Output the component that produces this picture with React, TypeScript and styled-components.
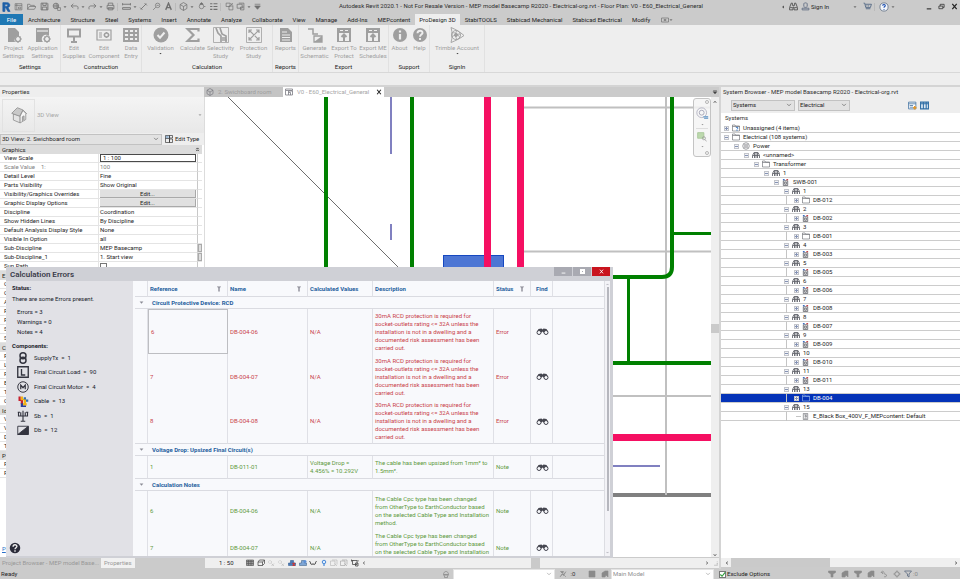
import React from "react";
import styled, { createGlobalStyle, css } from "styled-components";

const GlobalStyle = createGlobalStyle`
  *, *::before, *::after { box-sizing: border-box; }
  body { margin: 0; background: #cbcbcb; }
  body, button, input, select, table {
    font-family: Roboto, "Noto Sans", sans-serif;
    font-size: 6px;
    line-height: 8px;
    color: #1e1e1e;
  }
  button, input, select { margin: 0; padding: 0; border: 0; background: none; border-radius: 0; }
  select { appearance: none; }
  svg { display: block; flex: none; }
`;

/* ---------- icons ---------- */

const glyphs: Record<string, React.ReactNode> = {
  revit: (
    <path d="M3 1h6c3.500 0 5 1.700 5 4 0 2-1.200 3.300-3 3.900L14.500 15H11L8 9.300H6.200V15H3z M6.200 3.500v3.500h2.300c1.500 0 2.300-.6 2.300-1.800s-.8-1.700-2.300-1.700z" fillRule="evenodd" fill="#1d5fa8" stroke="#1d5fa8" />
  ),
  home: <path d="M2 3h12v11H2z M2 6h12 M5 3v11 M8 9h4v3H8z" />,
  open: <path d="M1 13V4h4l1 2h7v2 M1 13l3-5h12l-3 5z" />,
  save: <path d="M2 2h11l1 1v11H2z M5 2v4h6V2 M4 14V9h8v5" strokeWidth="1.600" />,
  sync: <><circle cx="7" cy="7" r="5" fill="#b0b0b0" /><path d="M2 7h10 M7 2c3 3 3 7 0 10 M10 10h5v5h-5z" /></>,
  undo: <path d="M6 3L2 7l4 4 M2 7h9c3 0 4 2 3 6" strokeWidth="1.400" />,
  redo: <path d="M10 3l4 4-4 4 M14 7H5c-3 0-4 2-3 6" strokeWidth="1.400" />,
  print: <path d="M4 6V2h8v4 M2 6h12v6H2z M4 10h8v4H4z" strokeWidth="1.400" />,
  measure: <path d="M1 4h14 M1 2v4 M15 2v4 M1 10h14v3H1z" strokeWidth="1.500" />,
  align: <path d="M3 13L13 3 M10 2l4 4 M2 10l4 4" strokeWidth="1.500" />,
  tag: <><circle cx="10" cy="6" r="4" /><path d="M7 9l-5 5 M8 6h4" /></>,
  letter: <path d="M3 14L8 2l5 12 M5 10h6" strokeWidth="2.400" />,
  cube: <path d="M8 1l6 3.500v7L8 15l-6-3.500v-7z M2 4.500L8 8l6-3.500 M8 8v7" strokeWidth="1.300" />,
  section: <><circle cx="8" cy="8" r="4" /><path d="M8 1l3 3H5z M12 8h3" fill="currentColor" /></>,
  lines: <path d="M2 3h4 M2 8h4 M2 13h4 M8 3h7 M8 8h7 M8 13h7" strokeWidth="2" />,
  closeHidden: <path d="M2 2h7v6H2z M7 7h7v7H7z M10 2l4 4 M14 2l-4 4" />,
  switchWin: <path d="M2 4h9v7H2z M5 2h9v7 M8 9h6v5H8z" strokeWidth="1.300" />,
  more: <path d="M3 4h10 M3 7h10l-5 6z" fill="currentColor" />,
  binoc: <path d="M4 2h2v4h4V2h2l3 8v4H9V9H7v5H1v-4z M2 10h4 M10 10h4" strokeWidth="1.400" />,
  user: <path d="M5 3c0-2 6-2 6 0v5c-1 2-5 2-6 0z M2 14v-3h12v3z" strokeWidth="1.500" />,
  cart: <path d="M1 2h2l2 8h8l2-6H4 M5 12h8 M7 6v2 M10 6v2" strokeWidth="1.500" />,
  helpRing: <><circle cx="8" cy="8" r="6.500" fill="#f2f5fa" /><path d="M6 6c0-3 4.500-2.500 4 0-.3 1.200-2 1.300-2 3 M8 11v1.500" strokeWidth="1.800" stroke="#1d4fb0" /></>,
  min: <path d="M2 13h12" strokeWidth="2.800" />,
  restore: <path d="M2 7h9v6H2z M5 7V3h9v7h-3" strokeWidth="1.800" />,
  close: <path d="M3 2l10 12 M13 2L3 14" strokeWidth="2.800" />,
  docGear: (
    <>
      <path d="M2 1h7l4 4v4a4 4 0 0 0-4 6H2z" fill="currentColor" stroke="none" />
      <circle cx="12" cy="12" r="2.500" />
      <path d="M12 8v1.500 M12 14.500V16 M8 12h1.500 M14.500 12H16 M9.500 9.500l1 1 M13.500 13.500l1 1 M14.500 9.500l-1 1 M10.500 13.500l-1 1" />
    </>
  ),
  appGear: (
    <>
      <path d="M1 1h13v8a4 4 0 0 0-6 6H1z" fill="currentColor" stroke="none" />
      <path d="M2 4h11" stroke="#eee" />
      <circle cx="12" cy="12" r="2.500" />
      <path d="M12 8v1.500 M12 14.500V16 M8 12h1.500 M14.500 12H16 M9.500 9.500l1 1 M13.500 13.500l1 1 M14.500 9.500l-1 1 M10.500 13.500l-1 1" />
    </>
  ),
  supplies: <path d="M2 2.500h12v7H2z M8 10v5 M5 15h6" strokeWidth="2" />,
  component: <><path d="M1 3h14v10H1z M3 6h3 M3 8h3 M3 10h3" /><circle cx="10.500" cy="8" r="2" strokeWidth="1.400" /><path d="M10.500 5v1 M10.500 10v1 M7.500 8h1 M12.500 8h1" /></>,
  gridTable: <path d="M1 2h14v12H1z M1 6h14 M1 10h14 M6 2v12 M11 2v12" strokeWidth="1.900" />,
  tickDisc: <><circle cx="8" cy="8" r="7.500" fill="currentColor" stroke="none" /><path d="M4.500 8l2.500 2.700L11.500 5.500" stroke="#eee" strokeWidth="2" /></>,
  sigma: <path d="M13.500 4.500V2H2.500l6 6-6 6h11v-2.500" strokeWidth="2.200" strokeLinejoin="miter" />,
  selectivity: <><path d="M.5.5h15v15H.5z" strokeWidth=".8" /><path d="M3 1l2 5 3 3v6 M7 1l2 6 4 2v6 M9 11h4 M9 13h5" strokeWidth="1.700" /></>,
  protection: <><path d="M.5.5h15v15H.5z" strokeWidth=".8" /><path d="M3 3l10 10 M13 3L3 13 M3 6V3h3 M10 3h3v3 M3 10v3h3 M10 13h3v-3" strokeWidth="1.200" /></>,
  report: <><path d="M2 1h8l4 4v10H2z" fill="currentColor" stroke="none" /><path d="M4 5h5 M4 8h8 M4 10.500h8 M4 13h8" stroke="#eee" strokeWidth="1.200" /></>,
  schematic: <><path d="M1 2h5v5h5" strokeWidth="1.500" /><path d="M7 9h8v6H7z" strokeWidth="1.300" /><path d="M15 9v6H7z" fill="currentColor" stroke="none" /></>,
  exportPr: <><path d="M1 1h14v14H1z" fill="currentColor" stroke="none" /><path d="M3 6h10v8H3z" fill="#eee" stroke="none" /><path d="M8 14V8 M5.500 10L8 7.500 10.500 10" strokeWidth="2" /><path d="M4 3.500h3 M9 3.500h3" stroke="#eee" /></>,
  info: <><circle cx="8" cy="8" r="7" fill="currentColor" stroke="none" /><path d="M8 3.500v2 M8 7v5.500" stroke="#eee" strokeWidth="2.200" /></>,
  help: <><circle cx="8" cy="8" r="7" fill="currentColor" stroke="none" /><path d="M5.500 6.300C5.500 2.800 10.700 3 10.500 6 10.300 7.500 8 7.800 8 9.700 M8 11v2" stroke="#eee" strokeWidth="1.900" /></>,
  trimble: (
    <g strokeWidth=".9">
      <circle cx="7" cy="8" r="4.500" />
      <path d="M2 .5c1.500 5 1.500 10 0 15 5-2 9-4 13-7C11 5 7 2.500 2 .5z M3 6c3-1 6 1 8 5 M3 10c2-2 5-3 8-3 M8 3.500c-2 3-2 6 0 9" />
      <circle cx="7" cy="8" r="1.500" fill="currentColor" />
    </g>
  ),
  house: (
    <g strokeWidth=".7" stroke="#8c8c8c">
      <path d="M3 7v5.500l6 2.500V9z" fill="#e4e4e4" />
      <path d="M9 15l5-3V6.500L11.500 4 9 9z" fill="#f6f6f6" />
      <path d="M1.500 6.500L6.500 1.500 11.500 3.500 8.500 9z" fill="#c9c9c9" />
      <path d="M11.500 3.500L15 7 M11 13.500V9.500l1.500-.7v4" fill="#bdbdbd" />
    </g>
  ),
  editType: <><path d="M1 1h8v14H1z M9 1h6v5H9z M9 8h6v7H9z M1 7h8" /><path d="M4 1v6 M1 4h8" stroke="#4b7fb5" /></>,
  expand: <path d="M4 7l4-4 4 4 M4 13l4-4 4 4" strokeWidth="2.600" />,
  chevDown: <path d="M3 5l5 5 5-5" strokeWidth="1.800" />,
  chevUp: <path d="M3 11l5-6 5 6" strokeWidth="3.400" />,
  chevLeft: <path d="M11 3L5 8l6 5" strokeWidth="3.400" />,
  chevRight: <path d="M5 3l6 5-6 5" strokeWidth="3.400" />,
  chevBold: <path d="M3 5l5 6 5-6" strokeWidth="3.400" />,
  caret: <path d="M2 5h12L8 12z" fill="currentColor" stroke="none" />,
  caretLeft: <path d="M12 2v12L4 8z" fill="currentColor" stroke="none" />,
  planView: <path d="M1 2h14v3H1z M1 5v9h6 M7 6h8v8H7z M7 9h4v5" strokeWidth="1.500" />,
  folder: <path d="M1 14V2h5l1 2h8v10z M1 5h14" fill="#fff" strokeWidth="1.200" />,
  folderQ: <><path d="M1 14V2h5l1 2h8v10z M1 5h14" fill="#fff" /><path d="M8 8c0-2 4-2 4 0 0 1.500-2 1.500-2 3 M10 12.500V14" stroke="#2d6fc0" strokeWidth="2" /></>,
  power: <><circle cx="8" cy="8" r="6.500" /><path d="M6 4v8 M10 4v8" strokeWidth="1.600" /></>,
  circuit: <path d="M1 14V9l3-6h8l3 6v5 M5 4v10 M11 4v10 M1 9h14 M5 12h6 M8 3v6" strokeWidth="1.700" />,
  panelBoard: <><path d="M3 4h10v11H3z M6 7h4v5H6z" strokeWidth="1.900" /><path d="M2 0h4v3H2z" fill="#3b6fc4" stroke="none" /><path d="M10 0h4v3h-4z" fill="#c9444a" stroke="none" /></>,
  device: <path d="M3 1h10v14H3z M5 4h6 M5 12h6 M7 6h3v3H7z" strokeWidth="1.400" />,
  sheetStar: <><path d="M1 2h13v12H1z M1 5h13 M3 8h6 M3 11h6" stroke="#3f6f9f" strokeWidth="1.400" fill="#fff" /><path d="M12 9v6 M9 12h6" stroke="#e2962a" strokeWidth="2.600" /></>,
  columns: <path d="M1 2h14v12H1z M1 5h14 M6 2v12 M11 2v12" stroke="#2f6ea5" strokeWidth="1.900" fill="#dbe7f2" />,
  hatch: <><path d="M1 2h14v11H1z" fill="#9a9a9a" /><path d="M1 5h14 M1 9h14 M5 2v11 M10 2v11" stroke="#555" /></>,
  style: <path d="M2 6h9v7H2z M2 6l3-4h10l-4 4 M15 2v7l-4 4" strokeWidth="1.500" />,
  sunOff: <><circle cx="6" cy="6" r="3" strokeDasharray="2 1" /><path d="M9 9l5 5 M14 9l-5 5" /></>,
  cropBlue: <><path d="M1 8h4V3h6v5h4v5H1z" fill="#4a7ab5" stroke="#355f94" /><path d="M9 8l5 5 M14 8l-5 5" stroke="#c33" strokeWidth="2.400" /></>,
  cropBlue2: <><path d="M1 8h4V3h6v5h4v5H1z" fill="#7fa6d5" stroke="#47688f" /><circle cx="12" cy="5" r="3" fill="#5b8fd6" stroke="none" /></>,
  glasses: <path d="M1 4l3 5 M15 4l-3 5 M3 8c0 4 5 4 5 1 0 3 5 3 5-1" strokeWidth="1.800" />,
  bulb: <><circle cx="8" cy="6" r="3.500" stroke="#4a8ad8" strokeWidth="2" fill="#dcecff" /><path d="M8 10v4" stroke="#4a8ad8" strokeWidth="2.500" /></>,
  frame: <path d="M1 4h9v9H1z M4 2h10v9 M9 9l5 5" />,
  constraints: <path d="M3 3h9v8H3z M1 1v4 M1 3h4 M14 2v3 M9 8h5v6H9z" strokeWidth="1.600" />,
  filterT: <path d="M3 2h10 M5 4h6 M7 5h2v9H7z" strokeWidth="1.700" />,
  transformer: <><circle cx="8" cy="5" r="4" strokeWidth="2" /><circle cx="8" cy="11" r="4" strokeWidth="2" /></>,
  load: <path d="M1 1h14v14H1z M6 4v8h5" strokeWidth="1.800" />,
  motor: <><circle cx="8" cy="8" r="7" strokeWidth="1.300" /><path d="M5 11V5.500l3 3.500 3-3.500V11" strokeWidth="1.600" /></>,
  cable: (
    <g stroke="none">
      <path d="M2 2h3v4h3v6H5V8H2z" fill="#c8202c" />
      <path d="M5 2h3v3h4v7H9V7H5z" fill="#f1b315" />
      <path d="M9 3h3v3h3v3h-3V6H9z" fill="#2f6fb5" />
      <path d="M8 11h5v3H8z" fill="#f1b315" />
      <path d="M5 11h3v3h4v2H5z" fill="#2a3f9a" />
    </g>
  ),
  busbar: <path d="M2 3v5h12V3 M8 1v14 M5 3v5 M11 3v5 M1 3h3 M12 3h3 M5 15h6" strokeWidth="1.500" />,
  board: <><path d="M1 3h14v11H1z" /><path d="M15 3v11H1z" fill="currentColor" /></>,
  funnel: <path d="M1 2h14l-5 6v6l-3-2V8z" strokeWidth="1.600" />,
  worker: <path d="M3 9c0-8 10-8 10 0z M2 10h12 M5 11v4h6v-4" strokeWidth="1.500" />,
  pick: <path d="M2 14l4-6 3 3 5-8 M3 3h6l-2 4z M9 9l5 5" fill="currentColor" strokeWidth="1.300" />,
  block: <path d="M2 2h12v12H2z" fill="currentColor" />,
  blockPick: <path d="M2 14V6l6-4h6v12l-4-4-2 4z" fill="currentColor" />,
  gear: <><circle cx="8" cy="8" r="4.500" strokeWidth="2" /><path d="M8 1v2 M8 13v2 M1 8h2 M13 8h2" strokeWidth="2" /></>,
  link: <path d="M2 5c2-4 6-3 6 1s4 1 5 4-3 5-5 3 M2 5h3v3" strokeWidth="1.500" />,
  pin: <path d="M1 2h14v3l-5 3v6H6V8L1 5z" fill="currentColor" />,
  wheel: <><circle cx="7" cy="7" r="6" stroke="#aab" strokeWidth="1" /><circle cx="7" cy="7" r="3" stroke="#aab" /><path d="M9 12h6 M10 14h5" stroke="#7fa8cf" strokeWidth="1.800" /></>,
  zoomRegion: <><path d="M1 1h10v9H1z" fill="#bcd9ad" stroke="#a3c493" /><circle cx="11" cy="10" r="2.500" stroke="#999" /><path d="M13 12l2 3" stroke="#999" /></>,
  grip: <path d="M14 4v10H4 M14 9v5H9" strokeDasharray="2 2" strokeWidth="2" />,
  tickMark: <path d="M3 8l4 4 7-9" stroke="#2e9c3a" strokeWidth="2.600" />,
  panelToggle: <path d="M1 4h14v8H1z M6 7h4v2H6z" strokeWidth="1.500" />,
};

const Glyph = ({ name, size = 8 }: { name: string; size?: number }) => (
  <svg width={size} height={size} viewBox="0 0 16 16" fill="none" stroke="currentColor" strokeWidth="1.200" aria-hidden="true">
    {glyphs[name]}
  </svg>
);

const FindGlyph = () => (
  <svg width="13" height="7" viewBox="0 0 26 14" aria-hidden="true">
    <path d="M5 2l6-1 2 2 2-2 6 1 3 5-4 3-5-1-2-2-2 2-5 1-4-3z" fill="#44454f" />
    <circle cx="6" cy="9" r="4" fill="#f8f9fc" stroke="#44454f" strokeWidth="2" />
    <circle cx="20" cy="9" r="4" fill="#f8f9fc" stroke="#44454f" strokeWidth="2" />
  </svg>
);

/* ---------- frame ---------- */

const Shell = styled.div`
  position: relative;
  display: flex;
  flex-direction: column;
  height: 100vh;
  overflow: hidden;
  background: #cbcbcb;
  white-space: nowrap;
`;

const TitleBar = styled.header`
  display: flex;
  align-items: center;
  height: 13px;
  color: #6f6f6f;
`;

const Slot = styled.button<{ $w: number; $color?: string }>`
  display: flex;
  align-items: center;
  justify-content: center;
  flex: none;
  width: ${(p) => p.$w}px;
  height: 12px;
  color: ${(p) => p.$color ?? "inherit"};
`;

const Gap = styled.span<{ $w: number }>`
  flex: none;
  width: ${(p) => p.$w}px;
`;

const Separator = styled.span`
  flex: none;
  width: 1px;
  height: 8px;
  margin: 0 2px 0 1px;
  background: #bababa;
`;

const WindowTitle = styled.h1`
  flex: 1;
  margin: 0;
  padding-bottom: 2px;
  text-align: center;
  font-size: 6px;
  line-height: 8px;
  font-weight: 400;
  color: #2e2e2e;
`;

const SignInLabel = styled.button`
  width: 38px;
  text-align: left;
`;

const TabRow = styled.nav`
  display: flex;
  align-items: stretch;
  height: 12px;
  padding-top: 1px;
`;

const RibbonTab = styled.button<{ $active?: boolean; $file?: boolean }>`
  padding: 0 5px;
  color: #242424;
  ${(p) => p.$active && css`background: #eeeeee; padding: 0 4px;`}
  ${(p) => p.$file && css`background: #1f78b4; color: #fff; width: 23px; padding: 0;`}
`;

const Ribbon = styled.section`
  display: flex;
  height: 48px;
  background: #eeeeee;
  border-bottom: 1px solid #d8d8d8;
`;

const Panel = styled.div<{ $w: number }>`
  display: flex;
  flex-direction: column;
  justify-content: space-between;
  width: ${(p) => p.$w}px;
  padding: 2px 0 1px;
  border-right: 1px solid #e1e1e1;
`;

const PanelButtons = styled.div`
  display: flex;
`;

const PanelCaption = styled.div`
  text-align: center;
  color: #242424;
`;

const ToolButton = styled.button<{ $w: number }>`
  display: flex;
  flex-direction: column;
  align-items: center;
  flex: none;
  width: ${(p) => p.$w}px;
  color: #9f9f9f;
  white-space: pre;
  text-align: center;
  & > span { margin-top: 1px; }
`;

const MenuMark = styled.i`
  display: block;
  color: #444;
`;

const OptionsBar = styled.div`
  height: 14px;
  background: #eeeeee;
  border-bottom: 2px solid #d4d4d4;
`;

const Main = styled.main`
  flex: 1;
  min-height: 0;
  display: grid;
  grid-template-columns: 204px minmax(0, 1fr) 241px;
`;

/* ---------- properties ---------- */

const Column = styled.section`
  display: flex;
  flex-direction: column;
  min-width: 0;
  min-height: 0;
`;

const DockTitle = styled.h2`
  flex: none;
  margin: 0;
  height: 10px;
  padding: 1px 2px;
  font-size: 6px;
  line-height: 8px;
  font-weight: 400;
  background: #eeeeee;
  color: #2e2e2e;
`;

const TypeCard = styled.div`
  display: flex;
  align-items: center;
  height: 36px;
  padding: 1px 2px;
  background: linear-gradient(#f4f4f4, #e8e8e8);
  color: #a6a6a6;
`;

const TypeThumb = styled.span`
  display: flex;
  align-items: center;
  justify-content: center;
  width: 33px;
  height: 33px;
  border: 1px solid #e2e2e2;
`;

const TypeName = styled.span`
  flex: 1;
  padding-left: 2px;
`;

const InstanceBar = styled.div`
  display: flex;
  align-items: center;
  height: 12px;
  gap: 3px;
  background: #eeeeee;
`;

const SelectBox = styled.label<{ $w?: number; $plain?: boolean }>`
  display: grid;
  grid-template-columns: minmax(0, 1fr) 8px;
  align-items: center;
  ${(p) => (p.$w ? `width: ${p.$w}px;` : "flex: 1;")}
  height: 11px;
  border: 1px solid ${(p) => (p.$plain ? "#e4e4e4" : "#c2c2c2")};
  background: ${(p) => (p.$plain ? "#ffffff" : "#e2e2e2")};
  color: ${(p) => (p.$plain ? "#a0a0a0" : "#5a5a5a")};
  select {
    grid-area: 1 / 1 / 2 / 3;
    width: 100%;
    padding-left: 1px;
    color: ${(p) => (p.$plain ? "#909090" : "#1e1e1e")};
  }
  svg { grid-area: 1 / 2; pointer-events: none; }
`;

const EditType = styled.button`
  display: flex;
  align-items: center;
  gap: 2px;
  width: 36px;
`;

const PropsBody = styled.div`
  flex: 1;
  min-height: 0;
  overflow: hidden;
  background: #fff;
`;

const PropsTable = styled.table`
  width: 202px;
  border-collapse: separate;
  border-spacing: 0;
  table-layout: fixed;
  td, th {
    height: 9px;
    padding: 0 1px;
    border-bottom: 1px solid #e4e4e4;
    font-weight: 400;
    text-align: left;
    overflow: hidden;
  }
  tbody th { padding-left: 4px; border-right: 1px solid #e4e4e4; }
  tr > td:last-child { border-left: 1px solid #c8c8c8; padding: 0; }
`;

const GroupHead = styled.th`
  && { background: #dcdcdc; padding: 0 2px; border: 0; height: 9px; }
  div { display: flex; justify-content: space-between; align-items: center; }
`;

const PropRow = styled.tr<{ $muted?: boolean }>`
  th, td { color: ${(p) => (p.$muted ? "#808080" : "#1e1e1e")}; }
`;

const ScaleInput = styled.input`
  display: block;
  width: 100%;
  height: 8px;
  padding: 0 0 1px 2px;
  line-height: 6px;
  border: 1px solid #4a4a4a;
`;

const EditButton = styled.button`
  display: block;
  width: 100%;
  height: 8px;
  line-height: 7px;
  background: #e0e0e0;
  border: solid #a9a9a9;
  border-width: 0 1px 1px 0;
`;

const MiniButton = styled.button`
  display: block;
  width: 4px;
  height: 8px;
  background: #dedede;
  border: 1px solid #aaa;
`;

const SmallCheck = styled.input`
  display: block;
  appearance: none;
  width: 7px;
  height: 7px;
  border: 1px solid #777;
  background: #fff;
`;

const HelpLink = styled.a`
  flex: none;
  padding: 0 2px 4px;
  background: #fff;
  color: #2a6fc9;
`;

const DockTabs = styled.div`
  flex: none;
  display: flex;
  align-items: center;
  height: 12px;
  padding-left: 2px;
  gap: 3px;
  background: #cbcbcb;
`;

const DockTab = styled.button<{ $active?: boolean }>`
  height: 10px;
  color: #989898;
  ${(p) => p.$active ? css`padding: 0 3px; background: #f1f1f1;` : css`width: 96px; text-align: left;`}
`;

/* ---------- drawing area ---------- */

const ViewTabs = styled.div`
  flex: none;
  display: flex;
  align-items: center;
  height: 10px;
  background: #cbcbcb;
`;

const ViewTab = styled.button<{ $active?: boolean; $w: number }>`
  display: flex;
  align-items: center;
  gap: 4px;
  width: ${(p) => p.$w}px;
  height: 10px;
  padding: 0 2px;
  background: ${(p) => (p.$active ? "#ffffff" : "#c4c4c4")};
  color: ${(p) => (p.$active ? "#a6a6a6" : "#9c9c9c")};
  svg:first-child { color: #74747c; }
  svg:last-child:not(:first-child) { margin-left: auto; color: #222; }
`;

const Spacer = styled.span`
  flex: 1;
`;

const CanvasRow = styled.div`
  flex: 1;
  min-height: 0;
  display: flex;
  border-left: 1px solid #dcdcdc;
`;

const Canvas = styled.div`
  position: relative;
  flex: 1;
  min-width: 0;
  overflow: hidden;
  background: #fff;
`;

const NavBar = styled.div`
  position: absolute;
  top: 1px;
  right: 0;
  display: flex;
  flex-direction: column;
  align-items: center;
  justify-content: space-between;
  width: 18px;
  height: 59px;
  padding: 1px 0;
  border: 1px solid #c4c4c4;
  border-radius: 3px;
  background: rgba(245, 245, 245, 0.85);
  color: #9a9a9a;
  hr { width: 12px; margin: 0; border: 0; border-top: 1px solid #ddd; }
`;

const NavDot = styled.button`
  align-self: flex-end;
  width: 4px;
  height: 4px;
  margin-right: 1px;
  border: 1px solid #b5b5b5;
  border-radius: 50%;
`;

const VScroll = styled.div`
  flex: none;
  display: flex;
  flex-direction: column;
  justify-content: space-between;
  align-items: center;
  width: 8px;
  padding: 3px 0 0;
  background: #efefef;
  color: #444;
`;

const VThumb = styled.span`
  width: 8px;
  height: 9px;
  background: #cacaca;
`;

const ViewBar = styled.div`
  flex: none;
  display: flex;
  align-items: center;
  height: 12px;
  padding-left: 14px;
  background: #efefef;
  border: solid #cbcbcb;
  border-width: 1px 0 1px 1px;
  color: #4a4a4a;
`;

const ScaleLabel = styled.button`
  width: 25px;
  text-align: left;
`;

const HTrack = styled.div<{ $before: number }>`
  flex: 1;
  align-self: stretch;
  display: flex;
  padding-left: ${(p) => p.$before}px;
`;

const HThumb = styled.span<{ $w: number }>`
  width: ${(p) => p.$w}px;
  background: #cacaca;
`;

/* ---------- system browser ---------- */

const BrowserColumn = styled(Column)`
  border-left: 2px solid #d4d4d4;
`;

const BrowserTools = styled.div`
  flex: none;
  display: flex;
  align-items: center;
  gap: 3px;
  height: 16px;
  padding: 0 31px 0 10px;
  background: #eeeeee;
`;

const BrowserBody = styled.div`
  flex: 1;
  min-height: 0;
  overflow: hidden;
  background: #fff;
`;

const TreeHead = styled.div`
  height: 11px;
  padding: 1px 4px 0;
  color: #333;
`;

const Tree = styled.ul`
  margin: 0;
  padding: 0;
  list-style: none;
`;

const TreeRow = styled.li<{ $selected?: boolean }>`
  display: flex;
  align-items: center;
  height: 9px;
  padding-left: 1px;
  border-bottom: 1px solid #cccccc;
  background: ${(p) => (p.$selected ? "#0433b8" : "transparent")};
  color: ${(p) => (p.$selected ? "#ffffff" : "#262626")};
  svg { color: ${(p) => (p.$selected ? "#9fc0ee" : "#5f6168")}; }
  svg path { ${(p) => p.$selected && "fill: none;"} }
`;

const Indent = styled.span<{ $line?: boolean }>`
  flex: none;
  width: 10px;
  height: 9px;
  ${(p) => p.$line && "background: linear-gradient(#c4c4c4, #c4c4c4) 4px 0 / 1px 100% no-repeat;"}
`;

const Toggle = styled.button<{ $open?: boolean }>`
  flex: none;
  width: 5px;
  height: 5px;
  margin: 1px 3px 0 2px;
  border: 1px solid #c3c5cb;
  background:
    linear-gradient(#8492b4, #8492b4) center / 3px 1px no-repeat,
    ${(p) => (p.$open ? "" : "linear-gradient(#8492b4, #8492b4) center / 1px 3px no-repeat,")}
    #f2f3f6;
`;

const Leaf = styled.span`
  flex: none;
  width: 5px;
  height: 1px;
  margin: 0 1px 0 4px;
  background: #c4c4c4;
`;

const TreeLabel = styled.span<{ $gap: number }>`
  padding-left: ${(p) => p.$gap}px;
`;

const BrowserScroll = styled.div`
  flex: none;
  display: flex;
  align-items: center;
  height: 12px;
  padding: 0 2px;
  background: #efefef;
  border-bottom: 2px solid #cbcbcb;
  border-top: 1px solid #fff;
  color: #333;
`;

/* ---------- status bar ---------- */

const StatusBar = styled.footer`
  flex: none;
  display: flex;
  align-items: center;
  height: 10px;
  color: #8a8a8a;
`;

const Ready = styled.span`
  width: 438px;
  padding-left: 1px;
  color: #1e1e1e;
`;

const CheckLabel = styled.label`
  display: flex;
  align-items: center;
  gap: 1px;
  width: 106px;
  color: #1e1e1e;
  span { display: grid; }
  span > * { grid-area: 1 / 1; }
`;

/* ---------- dialog ---------- */

const Dialog = styled.section`
  position: absolute;
  left: 6px;
  top: 267px;
  width: 607px;
  height: 291px;
  display: flex;
  flex-direction: column;
  background: #cfd0d6;
  border: solid #cfd0d6;
  border-width: 0 3px 2px 0;
`;

const DialogBar = styled.div`
  flex: none;
  display: flex;
  align-items: flex-start;
  height: 14px;
`;

const DialogTitle = styled.h2`
  flex: 1;
  margin: 0;
  padding: 2px 4px;
  font-size: 8px;
  line-height: 11px;
  font-weight: 600;
  color: #3a3b4a;
`;

const WinButton = styled.button<{ $danger?: boolean }>`
  display: flex;
  align-items: center;
  justify-content: center;
  width: 18px;
  height: 9px;
  margin-left: 1px;
  color: #fff;
  background: ${(p) => (p.$danger ? "#c9141e" : "#a9aab2")};
`;

const DialogBody = styled.div`
  flex: 1;
  min-height: 0;
  display: flex;
`;

const Summary = styled.aside`
  flex: none;
  display: flex;
  flex-direction: column;
  width: 127px;
  padding: 3px 0 2px 6px;
  background: #e1e1e6;
  color: #20212c;
  h3 { margin: 0; font-size: 6px; line-height: 8px; font-weight: 700; }
  p { margin: 3px 0 4px; line-height: 8px; }
`;

const Counts = styled.ul`
  margin: 0 0 5px;
  padding: 0 0 0 5px;
  list-style: none;
  line-height: 10px;
`;

const Components = styled.ul`
  margin: 1px 0 0;
  padding: 0 0 0 5px;
  list-style: none;
  li { display: flex; align-items: center; gap: 5px; height: 15px; padding-bottom: 1px; }
  li:nth-child(odd) { height: 14px; }
  svg { color: #33343f; }
`;

const HelpButton = styled.button`
  width: 12px;
  margin-top: auto;
  margin-left: -3px;
  color: #2b2c3a;
`;

const GridWrap = styled.div`
  flex: 1;
  min-width: 0;
  overflow: hidden;
  padding-left: 2px;
  background: #f8f9fc;
`;

const Grid = styled.table`
  width: 100%;
  border-collapse: separate;
  border-spacing: 0;
  table-layout: fixed;
  white-space: pre-line;
  th, td {
    padding: 0 1px 0 2px;
    text-align: left;
    vertical-align: middle;
    border-right: 1px solid #dfe0e6;
  }
  th:last-child, td:last-child { border-right: 0; }
  thead th { height: 16px; font-weight: 700; color: #1f5f9e; border-bottom: 1px solid #dadbe1; }
  thead div { display: flex; align-items: center; justify-content: space-between; color: #7c7d88; padding-right: 4px; white-space: nowrap; }
  thead span { color: #1f5f9e; }
  thead th:nth-child(7) { padding-left: 5px; }
`;

const GroupRow = styled.tr`
  th {
    height: 12px;
    padding-left: 4px;
    font-weight: 700;
    color: #1f5f9e;
    border: solid #dadbe1;
    border-width: 0 0 1px;
  }
  th:first-child { color: #8a8b94; }
`;

const ErrorRow = styled.tr<{ $kind: string; $h: number; $last?: boolean }>`
  height: ${(p) => p.$h}px;
  td {
    color: ${(p) => (p.$kind === "Error" ? "#c9414b" : "#5e9a41")};
    border-bottom: ${(p) => (p.$last ? "1px solid #dadbe1" : "0")};
  }
`;

const FocusCell = styled.td`
  && { border: 1px solid #bdbec2; }
`;

const FindButton = styled.button`
  display: block;
  margin: 0 auto;
`;

const DialogScroll = styled.div`
  flex: none;
  display: flex;
  flex-direction: column;
  align-items: center;
  gap: 1px;
  width: 6px;
  padding: 2px 0;
  background: #f3f3f7;
  border-left: 1px solid #dcdde2;
  color: #9a9ba3;
`;

const DialogThumb = styled.span`
  width: 2px;
  height: 224px;
  margin-bottom: auto;
  background: #b6b7be;
`;

/* ---------- data ---------- */

type Tool = [icon: string, label: string, width: number, menu?: boolean];
const panels: { caption: string; width: number; tools: Tool[] }[] = [
  { caption: "Settings", width: 61, tools: [["docGear", "Project\nSettings", 27], ["appGear", "Application\nSettings", 31]] },
  { caption: "Construction", width: 81, tools: [["supplies", "Edit\nSupplies", 26], ["component", "Edit\nComponent", 34], ["gridTable", "Data\nEntry", 20]] },
  { caption: "Calculation", width: 131, tools: [["tickDisc", "Validation", 37, true], ["sigma", "Calculate", 27], ["selectivity", "Selectivity\nStudy", 29], ["protection", "Protection\nStudy", 37]] },
  { caption: "Reports", width: 26, tools: [["report", "Reports", 25]] },
  { caption: "Export", width: 90, tools: [["schematic", "Generate\nSchematic", 31], ["exportPr", "Export To\nProtect", 28], ["exportPr", "Export ME\nSchedules", 30]] },
  { caption: "Support", width: 41, tools: [["info", "About", 21], ["help", "Help", 19]] },
  { caption: "SignIn", width: 55, tools: [["trimble", "Trimble Account", 54, true]] },
];

const ribbonTabs = [
  "File", "Architecture", "Structure", "Steel", "Systems", "Insert", "Annotate", "Analyze", "Collaborate", "View", "Manage",
  "Add-Ins", "MEPcontent", "ProDesign 3D", "StabiTOOLS", "Stabicad Mechanical", "Stabicad Electrical", "Modify",
];

const quickTools: [string, number][] = [
  ["home", 12], ["open", 15], ["save", 11], ["sync", 12], ["caret", 6], ["undo", 12], ["caret", 6], ["redo", 12], ["caret", 6],
  ["print", 12], ["|", 4], ["measure", 12], ["caret", 5], ["align", 13], ["tag", 12], ["letter", 12], ["|", 4], ["cube", 11],
  ["caret", 6], ["section", 12], ["lines", 12], ["|", 4], ["closeHidden", 12], ["switchWin", 11], ["caret", 5], ["more", 12],
];

type Prop = [name: string, value?: string, kind?: string];
const graphics: Prop[] = [
  ["View Scale", "1 : 100", "input"],
  ["Scale Value\u00a0\u00a0\u00a0 1:", "100", "muted"],
  ["Detail Level", "Fine"],
  ["Parts Visibility", "Show Original"],
  ["Visibility/Graphics Overrides", "Edit...", "button"],
  ["Graphic Display Options", "Edit...", "button"],
  ["Discipline", "Coordination"],
  ["Show Hidden Lines", "By Discipline"],
  ["Default Analysis Display Style", "None"],
  ["Visible In Option", "all"],
  ["Sub-Discipline", "MEP Basecamp", "mini"],
  ["Sub-Discipline_1", "1. Start view", "mini"],
  ["Sun Path", "", "check"],
];
const initials = (letters: string): Prop[] => [...letters].map((l) => [l]);
const propGroups: [string, Prop[]][] = [
  ["Graphics", graphics],
  ["E", initials("CCAFFSS")],
  ["C", initials("RLPETC")],
  ["Id", initials("VVDT")],
  ["P", initials("PP")],
];

type Node = { depth: number; icon: string; label: string; open?: boolean; leaf?: boolean; selected?: boolean };
const boards: [string, string, string][] = [
  ["1", "DB-012", "folder"], ["2", "DB-002", "panelBoard"], ["3", "DB-001", "folder"], ["4", "DB-003", "panelBoard"],
  ["5", "DB-005", "panelBoard"], ["6", "DB-006", "panelBoard"], ["7", "DB-008", "panelBoard"], ["8", "DB-007", "panelBoard"],
  ["9", "DB-009", "panelBoard"], ["10", "DB-010", "panelBoard"], ["11", "DB-011", "panelBoard"], ["13", "DB-004", "folder"],
];
const tree: Node[] = [
  { depth: 0, icon: "folderQ", label: "Unassigned (4 items)" },
  { depth: 0, icon: "folder", label: "Electrical (108 systems)", open: true },
  { depth: 1, icon: "power", label: "Power", open: true },
  { depth: 2, icon: "circuit", label: "<unnamed>", open: true },
  { depth: 3, icon: "folder", label: "Transformer", open: true },
  { depth: 4, icon: "circuit", label: "1", open: true },
  { depth: 5, icon: "panelBoard", label: "SWB-001", open: true },
  ...boards.flatMap(([circuit, name, icon]): Node[] => [
    { depth: 6, icon: "circuit", label: circuit, open: true },
    { depth: 7, icon, label: name, selected: name === "DB-004" },
  ]),
  { depth: 6, icon: "circuit", label: "15", open: true },
  { depth: 7, icon: "device", label: "E_Black Box_400V_F_MEPcontent: Default", leaf: true },
];

const rcd = "30mA RCD protection is required for\nsocket-outlets rating <= 32A unless the\ninstallation is not in a dwelling and a\ndocumented risk assessment has been\ncarried out.";
const cpc = "The Cable Cpc type has been changed\nfrom OtherType to EarthConductor based\non the selected Cable Type and Installation\nmethod.";
type Issue = { ref: string; name: string; value: string; text: string; kind: "Error" | "Note"; h: number };
const issueGroups: { title: string; rows: Issue[] }[] = [
  {
    title: "Circuit Protective Device: RCD",
    rows: ["6", "7", "8"].map((n): Issue => ({ ref: n, name: `DB-004-0${n}`, value: "N/A", text: rcd, kind: "Error", h: 45 })),
  },
  {
    title: "Voltage Drop: Upsized Final Circuit(s)",
    rows: [{ ref: "1", name: "DB-011-01", value: "Voltage Drop =\n4.456% = 10.292V", text: "The cable has been upsized from 1mm² to\n1.5mm².", kind: "Note", h: 23 }],
  },
  {
    title: "Calculation Notes",
    rows: [
      { ref: "6", name: "DB-004-06", value: "N/A", text: cpc, kind: "Note", h: 39 },
      { ref: "7", name: "DB-004-07", value: "N/A", text: cpc, kind: "Note", h: 36 },
    ],
  },
];

/* ---------- parts ---------- */

const PropertyRow = ({ prop: [name, value = "", kind] }: { prop: Prop }) => (
  <PropRow $muted={kind === "muted"}>
    <th scope="row">{name}</th>
    <td>
      {kind === "input" ? <ScaleInput aria-label={name} defaultValue={value} />
        : kind === "button" ? <EditButton aria-label={name}>{value}</EditButton>
        : kind === "check" ? <SmallCheck type="checkbox" aria-label={name} />
        : value}
    </td>
    <td>{kind === "mini" && <MiniButton aria-label={`Associate ${name}`} />}</td>
  </PropRow>
);

const Properties = () => (
  <Column>
    <DockTitle>Properties</DockTitle>
    <TypeCard>
      <TypeThumb><Glyph name="house" size={18} /></TypeThumb>
      <TypeName>3D View</TypeName>
      <Glyph name="caret" size={4} />
    </TypeCard>
    <InstanceBar>
      <SelectBox $w={162}>
        <select aria-label="Instance"><option>3D View: 2. Swichboard room</option></select>
        <Glyph name="chevDown" size={6} />
      </SelectBox>
      <EditType><Glyph name="editType" size={8} />Edit Type</EditType>
    </InstanceBar>
    <PropsBody>
      <PropsTable>
        <colgroup><col width="99" /><col width="98" /><col width="5" /></colgroup>
        {propGroups.map(([title, rows]) => (
          <tbody key={title}>
            <tr><GroupHead colSpan={3} scope="rowgroup"><div>{title}<Glyph name="expand" size={5} /></div></GroupHead></tr>
            {rows.map((r, i) => <PropertyRow key={i} prop={r} />)}
          </tbody>
        ))}
      </PropsTable>
    </PropsBody>
    <HelpLink href="#help" aria-label="Properties help">P</HelpLink>
    <DockTabs>
      <DockTab>Project Browser - MEP model Base...</DockTab>
      <DockTab $active>Properties</DockTab>
    </DockTabs>
  </Column>
);

const Plan = () => (
  <svg width="100%" height="100%" fill="none" role="img" aria-label="Floor plan">
    <path d="M319 10.500H600 M319 154.500H600 M380 299H600" stroke="#c0c0c0" strokeWidth="2" />
    <path d="M380 398H600" stroke="#808080" strokeWidth="4" />
    <path d="M461 0V398" stroke="#c0c0c0" strokeWidth="2" />
    <path d="M23 0L193 170" stroke="#6e6e6e" strokeWidth="1" />
    <path d="M121 0V300 M207 0V300" stroke="#008000" strokeWidth="4" />
    <path d="M186 0V57 M186 127V143" stroke="#8080c0" strokeWidth="2" />
    <path d="M380 369H455" stroke="#8080c0" strokeWidth="2" />
    <rect x="238.500" y="158.500" width="60" height="40" fill="#4d76d4" stroke="#1648c0" />
    <path d="M282.500 0V300 M315.500 0V300 M380 340.500H600" stroke="#f50f62" strokeWidth="7" />
    <path d="M467 0V170Q467 180 457 180H380 M380 266H600" stroke="#008000" strokeWidth="4" />
    <path d="M467 136.500H600 M423.500 180V266" stroke="#008000" strokeWidth="3" />
  </svg>
);

const viewIcons: [string, number, string?][] = [
  ["hatch", 11], ["style", 11], ["sunOff", 10, "#b4b4b4"], ["sunOff", 10, "#b4b4b4"], ["cropBlue", 11], ["cropBlue2", 11],
  ["glasses", 10], ["bulb", 11], ["frame", 10, "#b4b4b4"], ["frame", 10, "#9c9c9c"], ["constraints", 12], ["chevLeft", 6],
];

const DrawingArea = () => (
  <Column>
    <ViewTabs>
      <ViewTab $w={79}><Glyph name="cube" size={8} />2. Swichboard room</ViewTab>
      <ViewTab $active $w={101}><Glyph name="planView" size={8} />V0 - E60_Electrical_General<Glyph name="close" size={6} /></ViewTab>
      <Spacer />
      <Slot $w={9} $color="#444" aria-label="Open views"><Glyph name="more" size={6} /></Slot>
    </ViewTabs>
    <CanvasRow>
      <Canvas>
        <Plan />
        <NavBar>
          <NavDot aria-label="Close navigation bar" />
          <Glyph name="wheel" size={13} />
          <Glyph name="caret" size={3} />
          <hr />
          <Glyph name="zoomRegion" size={10} />
          <Glyph name="caret" size={3} />
          <NavDot aria-label="Navigation options" />
        </NavBar>
      </Canvas>
      <VScroll>
        <Glyph name="chevUp" size={4} />
        <VThumb />
        <Glyph name="chevBold" size={4} />
      </VScroll>
    </CanvasRow>
    <ViewBar>
      <ScaleLabel>1 : 50</ScaleLabel>
      {viewIcons.map(([icon, w, color], i) => (
        <Slot key={i} $w={w} $color={color} aria-label={icon}><Glyph name={icon} size={icon === "chevLeft" ? 4 : 8} /></Slot>
      ))}
      <HTrack $before={164}><HThumb $w={9} /></HTrack>
      <Slot $w={8} aria-label="Scroll right"><Glyph name="chevRight" size={4} /></Slot>
      <Slot $w={8} $color="#aaa" aria-label="Resize"><Glyph name="grip" size={6} /></Slot>
    </ViewBar>
  </Column>
);

const narrowIcons = ["panelBoard", "device"];

const SystemBrowser = () => (
  <BrowserColumn>
    <DockTitle>System Browser - MEP model Basecamp R2020 - Electrical-org.rvt</DockTitle>
    <BrowserTools>
      <SelectBox $w={64}><select aria-label="View"><option>Systems</option></select><Glyph name="chevDown" size={6} /></SelectBox>
      <SelectBox $w={52}><select aria-label="Discipline"><option>Electrical</option></select><Glyph name="chevDown" size={6} /></SelectBox>
      <Spacer />
      <Slot $w={9} aria-label="Autofit columns"><Glyph name="sheetStar" size={9} /></Slot>
      <Slot $w={9} aria-label="Column settings"><Glyph name="columns" size={9} /></Slot>
    </BrowserTools>
    <BrowserBody>
      <TreeHead>Systems</TreeHead>
      <Tree>
        {tree.map((n, i) => (
          <TreeRow key={i} $selected={n.selected}>
            {Array.from({ length: n.depth }, (_, d) => <Indent key={d} $line={d === 6} />)}
            {n.leaf ? <Leaf /> : <Toggle $open={n.open} aria-label={`Toggle ${n.label}`} />}
            <Glyph name={n.icon} size={narrowIcons.includes(n.icon) ? 7 : 8} />
            <TreeLabel $gap={narrowIcons.includes(n.icon) ? 4 : 3}>{n.label}</TreeLabel>
          </TreeRow>
        ))}
      </Tree>
    </BrowserBody>
    <BrowserScroll>
      <Slot $w={8} aria-label="Scroll left"><Glyph name="chevLeft" size={4} /></Slot>
      <HTrack $before={0}><HThumb $w={99} /></HTrack>
      <Glyph name="chevRight" size={4} />
    </BrowserScroll>
  </BrowserColumn>
);

const summaryItems: [string, string, number][] = [
  ["transformer", "SupplyTx \u00a0= \u00a01", 12], ["load", "Final Circuit Load \u00a0= \u00a090", 12], ["motor", "Final Circuit Motor \u00a0= \u00a04", 12],
  ["cable", "Cable \u00a0= \u00a013", 12], ["busbar", "Sb \u00a0= \u00a01", 12], ["board", "Db \u00a0= \u00a012", 12],
];

const columns: [string, number | undefined, boolean?][] = [
  ["", 13], ["Reference", 80, true], ["Name", 80, true], ["Calculated Values", 65], ["Description", 121], ["Status", 37, true], ["Find", 22], ["", undefined],
];

const CalculationErrors = () => (
  <Dialog role="dialog" aria-label="Calculation Errors">
    <DialogBar>
      <DialogTitle>Calculation Errors</DialogTitle>
      <WinButton aria-label="Minimize"><Glyph name="min" size={5} /></WinButton>
      <WinButton aria-label="Maximize"><svg width="5" height="5" viewBox="0 0 5 5"><path d="M0 0h5v5H0z M2 2h1v1H2z" fill="#fff" fillRule="evenodd" /></svg></WinButton>
      <WinButton $danger aria-label="Close"><Glyph name="close" size={5} /></WinButton>
    </DialogBar>
    <DialogBody>
      <Summary>
        <h3>Status:</h3>
        <p>There are some Errors present.</p>
        <Counts><li>Errors = 3</li><li>Warnings = 0</li><li>Notes = 4</li></Counts>
        <h3>Components:</h3>
        <Components>
          {summaryItems.map(([icon, label, size]) => (
            <li key={icon}><Glyph name={icon} size={size} /><span>{label}</span></li>
          ))}
        </Components>
        <HelpButton aria-label="Help"><Glyph name="help" size={12} /></HelpButton>
      </Summary>
      <GridWrap>
        <Grid>
          <colgroup>{columns.map(([, w], i) => <col key={i} width={w} />)}</colgroup>
          <thead>
            <tr>
              {columns.map(([label, , filter], i) => (
                <th key={i} scope="col"><div><span>{label}</span>{filter && <Glyph name="filterT" size={6} />}</div></th>
              ))}
            </tr>
          </thead>
          {issueGroups.map((g, gi) => (
            <tbody key={g.title}>
              <GroupRow><th><Glyph name="caret" size={5} /></th><th colSpan={7} scope="rowgroup">{g.title}</th></GroupRow>
              {g.rows.map((r, ri) => {
                const RefCell = gi === 0 && ri === 0 ? FocusCell : "td";
                return (
                  <ErrorRow key={r.ref} $kind={r.kind} $h={r.h} $last={ri === g.rows.length - 1}>
                    <td />
                    <RefCell>{r.ref}</RefCell>
                    <td>{r.name}</td>
                    <td>{r.value}</td>
                    <td>{r.text}</td>
                    <td>{r.kind}</td>
                    <td><FindButton aria-label={`Find ${r.name}`}><FindGlyph /></FindButton></td>
                    <td />
                  </ErrorRow>
                );
              })}
            </tbody>
          ))}
        </Grid>
      </GridWrap>
      <DialogScroll>
        <Glyph name="chevUp" size={3} />
        <DialogThumb />
        <Glyph name="chevBold" size={3} />
      </DialogScroll>
    </DialogBody>
  </Dialog>
);

export default function App() {
  return (
    <Shell>
      <GlobalStyle />
      <TitleBar>
        <Slot $w={12} aria-label="Revit"><Glyph name="revit" size={10} /></Slot>
        {quickTools.map(([icon, w], i) =>
          icon === "|" ? <Separator key={i} /> : (
            <Slot key={i} $w={w} aria-label={icon}><Glyph name={icon} size={icon === "caret" ? 4 : 9} /></Slot>
          ),
        )}
        <WindowTitle>Autodesk Revit 2020.1 - Not For Resale Version - MEP model Basecamp R2020 - Electrical-org.rvt - Floor Plan: V0 - E60_Electrical_General</WindowTitle>
        <Slot $w={8} $color="#555" aria-label="Collapse search"><Glyph name="caretLeft" size={4} /></Slot>
        <Slot $w={12} $color="#444" aria-label="Search"><Glyph name="binoc" size={9} /></Slot>
        <Slot $w={12} $color="#5c6a80" aria-label="Account"><Glyph name="user" size={9} /></Slot>
        <SignInLabel>Sign In</SignInLabel>
        <Slot $w={12} aria-label="Account menu"><Glyph name="caret" size={4} /></Slot>
        <Slot $w={12} $color="#4c6380" aria-label="Store"><Glyph name="cart" size={9} /></Slot>
        <Separator />
        <Slot $w={13} $color="#5a6a80" aria-label="Help"><Glyph name="helpRing" size={10} /></Slot>
        <Slot $w={6} aria-label="Help menu"><Glyph name="caret" size={4} /></Slot>
        <Gap $w={26} />
        <Slot $w={13} $color="#222" aria-label="Minimize"><Glyph name="min" size={6} /></Slot>
        <Slot $w={13} $color="#333" aria-label="Restore"><Glyph name="restore" size={7} /></Slot>
        <Slot $w={12} $color="#222" aria-label="Close"><Glyph name="close" size={7} /></Slot>
      </TitleBar>
      <TabRow>
        {ribbonTabs.map((t) => <RibbonTab key={t} $file={t === "File"} $active={t === "ProDesign 3D"}>{t}</RibbonTab>)}
        <Gap $w={4} />
        <Slot $w={16} $color="#777" aria-label="Ribbon display"><Glyph name="panelToggle" size={8} /><Glyph name="caret" size={4} /></Slot>
      </TabRow>
      <Ribbon>
        {panels.map((p) => (
          <Panel key={p.caption} $w={p.width}>
            <PanelButtons>
              {p.tools.map(([icon, label, w, menu]) => (
                <ToolButton key={label} $w={w}>
                  <Glyph name={icon} size={16} />
                  <span>{label}</span>
                  {menu && <MenuMark><Glyph name="caret" size={3} /></MenuMark>}
                </ToolButton>
              ))}
            </PanelButtons>
            <PanelCaption>{p.caption}</PanelCaption>
          </Panel>
        ))}
      </Ribbon>
      <OptionsBar />
      <Main>
        <Properties />
        <DrawingArea />
        <SystemBrowser />
      </Main>
      <StatusBar>
        <Ready>Ready</Ready>
        <Slot $w={15} aria-label="Worksets"><Glyph name="worker" size={8} /></Slot>
        <SelectBox $plain $w={102}><select aria-label="Active workset"><option></option></select><Glyph name="chevDown" size={6} /></SelectBox>
        <Gap $w={3} />
        <Slot $w={10} aria-label="Editing requests"><Glyph name="pick" size={8} /></Slot>
        <Slot $w={10} $color="#333">:0</Slot>
        <Gap $w={7} />
        <Slot $w={13} aria-label="Design options"><Glyph name="block" size={8} /></Slot>
        <Slot $w={13} aria-label="Pick to edit"><Glyph name="blockPick" size={8} /></Slot>
        <SelectBox $plain $w={103}><select aria-label="Design option"><option>Main Model</option></select><Glyph name="chevDown" size={6} /></SelectBox>
        <Gap $w={5} />
        <CheckLabel>
          <span><SmallCheck type="checkbox" defaultChecked /><Glyph name="tickMark" size={7} /></span>
          Exclude Options
        </CheckLabel>
        {["pin", "blockPick", "pin", "blockPick", "link", "gear", "funnel"].map((icon, i) => (
          <Slot key={i} $w={icon === "funnel" ? 10 : 13} $color={icon === "funnel" ? "#5a6a80" : undefined} aria-label={icon}><Glyph name={icon} size={8} /></Slot>
        ))}
        <span>:0</span>
      </StatusBar>
      <CalculationErrors />
    </Shell>
  );
}
